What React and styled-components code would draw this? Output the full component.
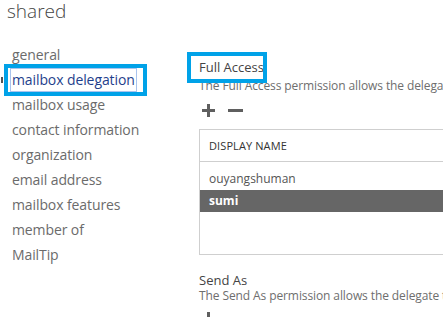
import React from 'react'
import styled, { createGlobalStyle } from 'styled-components'

const GlobalStyle = createGlobalStyle`
  html, body {
    margin: 0;
    padding: 0;
    background: #fff;
    overflow: hidden;
  }
  body {
    font-family: "Open Sans", "Liberation Sans", sans-serif;
    color: #444;
  }
`
const Page = styled.div`
  width: 443px;
  height: 317px;
  overflow: hidden;
`
const Title = styled.div`
  font-size: 19px;
  font-weight: 300;
  color: #444;
  line-height: 22px;
  padding: 0 0 0 7px;
`
const Body = styled.div`
  display: flex;
  margin-top: 20px;
`
const Side = styled.ul`
  list-style: none;
  margin: 0;
  padding: 0;
  width: 187px;
  flex-shrink: 0;
`
const NavItem = styled.li`
  position: relative;
  font-size: 14px;
  line-height: 25px;
  height: 25px;
  color: #6b6b6b;
  padding-left: 12px;
  white-space: nowrap;
  letter-spacing: -0.1px;
  &.on {
    color: #2a4f9e;
  }
`
const Callout = styled.span`
  position: absolute;
  z-index: 2;
  pointer-events: none;
  border: 4px solid #00a2e8;
  top: ${p => p.$top}px;
  left: ${p => p.$left}px;
  width: ${p => p.$w}px;
  height: ${p => p.$h}px;
  box-sizing: border-box;
`
const FocusRing = styled.span`
  display: inline-block;
  border: 1px solid #a9c4ee;
  padding: 0 1px;
  margin-left: -2px;
  line-height: 22px;
  background: #fff;
  color: #1f3f8c;
`
const Marker = styled.span`
  position: absolute;
  left: 1px;
  top: 10px;
  width: 2px;
  height: 6px;
  background: #555;
`
const Main = styled.div`
  flex: 1;
  padding-left: 12px;
  min-width: 0;
`
const HeadWrap = styled.div`
  position: relative;
  height: 22px;
  margin-top: 14px;
`
const Heading = styled.div`
  font-size: 13px;
  line-height: ${p => p.$lh || 22}px;
  color: #444;
  margin-top: ${p => p.$mt || 0}px;
`
const Desc = styled.div`
  font-size: 12px;
  line-height: 16px;
  color: #6e6e6e;
  white-space: nowrap;
  letter-spacing: -0.1px;
`
const Tools = styled.div`
  display: flex;
  align-items: center;
  gap: 13px;
  height: 13px;
  margin: ${p => p.$m};
`
const Table = styled.div`
  border: 1px solid #cfcfcf;
  border-right: none;
  height: 124px;
  width: 260px;
`
const HeadCell = styled.div`
  height: 31px;
  line-height: 32px;
  font-size: 11px;
  color: #333;
  padding-left: 9px;
  border-bottom: 1px solid #cfcfcf;
  letter-spacing: 0.1px;
`
const Rows = styled.div`
  padding-top: 6px;
`
const Row = styled.div`
  height: 22px;
  line-height: 22px;
  font-size: 12px;
  padding-left: 9px;
  color: ${p => (p.$sel ? '#fff' : '#555')};
  background: ${p => (p.$sel ? '#666' : 'transparent')};
  font-weight: ${p => (p.$sel ? 700 : 400)};
`

const PlusIcon = () => (
  <svg width="13" height="13" viewBox="0 0 13 13">
    <rect x="5" y="0" width="3" height="13" fill="#5f5f5f" />
    <rect x="0" y="5" width="13" height="3" fill="#5f5f5f" />
  </svg>
)
const MinusIcon = () => (
  <svg width="15" height="13" viewBox="0 0 15 13">
    <rect x="0" y="5" width="15" height="3" fill="#5f5f5f" />
  </svg>
)

const navItems = [
  'general',
  'mailbox delegation',
  'mailbox usage',
  'contact information',
  'organization',
  'email address',
  'mailbox features',
  'member of',
  'MailTip',
]

function App() {
  return (
    <Page>
      <GlobalStyle />
      <Title>shared</Title>
      <Body>
        <Side>
          {navItems.map(item =>
            item === 'mailbox delegation' ? (
              <NavItem key={item} className="on">
                <Marker />
                <FocusRing>{item}</FocusRing>
                <Callout $top={-3} $left={4} $w={143} $h={32} />
              </NavItem>
            ) : (
              <NavItem key={item}>{item}</NavItem>
            )
          )}
        </Side>
        <Main>
          <HeadWrap>
            <Heading>Full Access</Heading>
            <Callout $top={-4} $left={-12} $w={80} $h={31} />
          </HeadWrap>
          <Desc>The Full Access permission allows the delegate to open the mailbox</Desc>
          <Tools $m="10px 0 12px 3px">
            <PlusIcon />
            <MinusIcon />
          </Tools>
          <Table>
            <HeadCell>DISPLAY NAME</HeadCell>
            <Rows>
              <Row>ouyangshuman</Row>
              <Row $sel>sumi</Row>
            </Rows>
          </Table>
          <Heading $lh={16} $mt={17}>Send As</Heading>
          <Desc>The Send As permission allows the delegate to send email</Desc>
          <Tools $m="8px 0 0 3px">
            <PlusIcon />
            <MinusIcon />
          </Tools>
        </Main>
      </Body>
    </Page>
  )
}

export default App
